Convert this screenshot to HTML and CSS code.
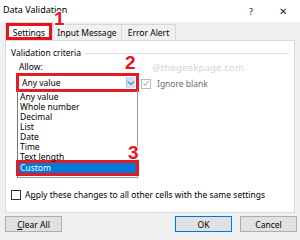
FILE: index.html
```html
<!DOCTYPE html>
<html>
<head>
<meta charset="utf-8">
<link rel="stylesheet" href="styles.css">
</head>
<body>
<div class="dialog">
  <div class="titlebar">
    <span class="title">Data Validation</span>
    <span class="ctrls"><span class="help">?</span><span class="close">✕</span></span>
  </div>
  <div class="tabs">
    <div class="tab active marked">Settings</div>
    <div class="tab">Input Message</div>
    <div class="tab">Error Alert</div>
  </div>
  <div class="panel">
    <div class="group-title"><span>Validation criteria</span><span class="rule"></span></div>
    <div class="criteria">
      <div class="allow">
        <div class="label">Allow:</div>
        <div class="combo-mark">
          <div class="combo">
            <span class="value">Any value</span>
            <span class="arrow"><svg width="8" height="6" viewBox="0 0 8 6"><path d="M1 1.5 L4 4.5 L7 1.5" fill="none" stroke="#333" stroke-width="1"/></svg></span>
          </div>
        </div>
        <ul class="list">
          <li>Any value</li>
          <li>Whole number</li>
          <li>Decimal</li>
          <li>List</li>
          <li>Date</li>
          <li>Time</li>
          <li>Text length</li>
          <li class="custom"><span>Custom</span></li>
        </ul>
      </div>
      <div class="side">
        <div class="watermark">@thegeekpage.com</div>
        <div class="check disabled">
          <span class="box"><svg width="9" height="9" viewBox="0 0 9 9"><path d="M1.5 4.5 L3.5 6.5 L7.5 2" fill="none" stroke="#8a8a8a" stroke-width="1"/></svg></span>
          <span>Ignore blank</span>
        </div>
      </div>
    </div>
    <div class="check apply">
      <span class="box"></span>
      <span>A<u>p</u>ply these changes to all other cells with the same settings</span>
    </div>
  </div>
  <div class="buttons">
    <button class="btn"><u>C</u>lear All</button>
    <span class="spacer"></span>
    <button class="btn default">OK</button>
    <button class="btn">Cancel</button>
  </div>
  <span class="num n1">1</span>
  <span class="num n2">2</span>
  <span class="num n3">3</span>
</div>
</body>
</html>
```
FILE: styles.css
```css
* { box-sizing: border-box; }
html, body { margin: 0; padding: 0; }
body { background: #f0f0f0; font-family: "Noto Sans", "Open Sans", sans-serif; font-size: 8.5px; color: #000; }
.dialog { position: relative; width: 300px; height: 240px; background: #f0f0f0; display: flex; flex-direction: column; overflow: hidden; }
.titlebar { height: 22px; background: #fff; display: flex; align-items: center; justify-content: space-between; padding: 0 0 4px 3px; font-size: 9px; }
.ctrls { display: flex; align-items: center; gap: 26px; padding-right: 13px; padding-top: 4px; }
.help { font-size: 9px; color: #222; }
.close { font-size: 10px; color: #222; }
.tabs { display: flex; padding-left: 5px; height: 18px; align-items: flex-end; }
.tab { height: 16px; line-height: 15px; border: 1px solid #d9d9d9; border-bottom: none; background: #f0f0f0; padding: 0; margin-left: -1px; white-space: nowrap; text-align: center; }
.tab.active { background: #fff; height: 18px; line-height: 19px; width: 48px; margin-left: 0; }
.marked { box-shadow: inset 0 0 0 3px #e8141b; }
.tab:nth-child(2) { width: 70px; }
.tab:nth-child(3) { width: 55px; }
.panel { margin: 0 5px; height: 173px; background: #fff; border: 1px solid #d9d9d9; padding: 6px 5px 0 5px; display: flex; flex-direction: column; }
.group-title { display: flex; align-items: center; height: 12px; line-height: 12px; }
.rule { flex: 1; height: 1px; background: #dcdcdc; margin-left: 4px; margin-right: 0; }
.criteria { display: flex; }
.allow { width: 129px; padding-left: 5px; display: flex; flex-direction: column; }
.label { height: 14px; line-height: 14px; margin-top: 1px; padding-left: 3px; }
.combo-mark { border: 3px solid #e31b23; width: 123px; margin-left: 0; margin-top: -1px; height: 19px; }
.combo { display: flex; height: 13px; border: 1px solid #fff; }
.value { flex: 1; line-height: 12px; padding-left: 2px; }
.arrow { width: 9px; background: #cce4f7; display: flex; align-items: center; justify-content: center; border-left: 1px solid #99c8f0; }
.list { list-style: none; margin: -2px 0 0 1px; padding: 2px 0 0 0; width: 121px; border-left: 1px solid #777; border-right: 1px solid #999; border-bottom: 1px solid #999; height: 88px; }
.list li { height: 10px; line-height: 10px; padding-left: 2px; white-space: nowrap; }
.list li.custom { height: 16px; margin: -2px -2px 0 -2px; border: 3px solid #e31b23; padding: 0; }
.list li.custom span { display: block; background: #0078d7; color: #fff; line-height: 10px; height: 10px; padding-left: 1px; margin: 0; }
.side { padding-left: 1px; padding-top: 2px; }
.watermark { color: #d4d4d4; font-size: 9.5px; padding-left: 11px; height: 14px; line-height: 14px; letter-spacing: 0.2px; }
.check { display: flex; align-items: center; gap: 6px; }
.check .box { width: 10px; height: 10px; border: 1px solid #333; display: flex; align-items: center; justify-content: center; background: #fff; }
.check.disabled { color: #6d6d6d; margin-top: 3px; }
.check.disabled .box { border-color: #bcbcbc; }
.apply { margin-top: 11px; padding-left: 0; gap: 4px; }
.buttons { display: flex; gap: 8px; padding: 3px 3px 0 5px; }
.spacer { flex: 1; }
.btn { font: inherit; font-size: 8.5px; width: 57px; height: 16px; background: #e1e1e1; border: 1px solid #adadad; padding: 0; color: #000; }
.btn.default { border: 1.5px solid #0078d7; }
.num { position: absolute; font-family: "Liberation Sans", Arial, sans-serif; font-weight: bold; font-size: 19px; color: #e8141b; line-height: 1; text-shadow: 1px 0 #fff, -1px 0 #fff, 0 1px #fff, 0 -1px #fff, 1px 1px #fff, -1px -1px #fff; }
.n1 { left: 54px; top: 9px; }
.n2 { left: 125px; top: 53px; }
.n3 { left: 128px; top: 143px; }
```
